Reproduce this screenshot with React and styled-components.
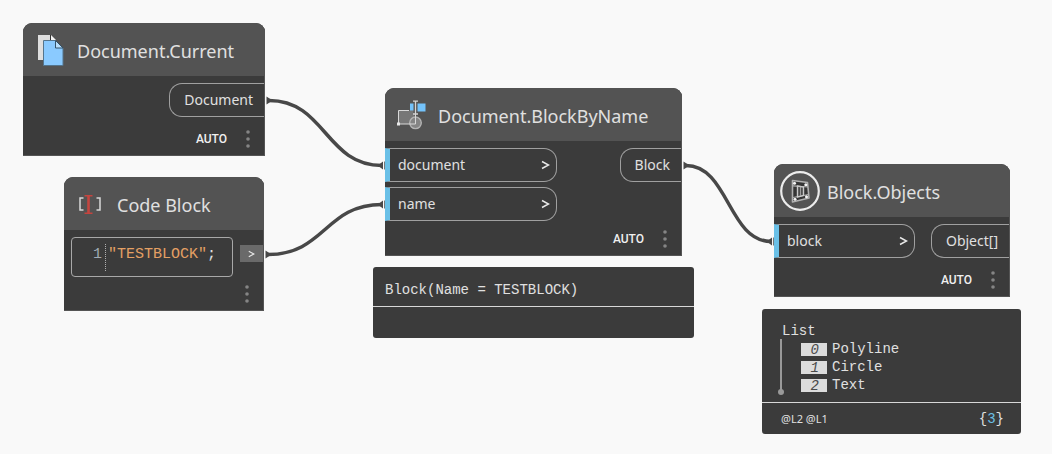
import React from "react";
import styled, { createGlobalStyle } from "styled-components";

const GlobalStyle = createGlobalStyle`
  * { box-sizing: border-box; }
  body { margin: 0; background: #f9f9f9; }
  button, input { font: inherit; color: inherit; padding: 0; margin: 0; }
  h2, ol, p { margin: 0; padding: 0; font-weight: 400; }
`;

const sans = `"Noto Sans", "Open Sans", sans-serif`;
const mono = `"Liberation Mono", monospace`;

const Canvas = styled.main`
  position: relative;
  min-height: 100vh;
  background: #f9f9f9;
  color: #e0e0e0;
  font-family: ${sans};
`;

const Wires = styled.svg`
  position: absolute;
  inset: 0;
  width: 100%;
  height: 100%;
  pointer-events: none;
`;

const Placed = styled.div`
  position: absolute;
  left: ${(p) => p.$x}px;
  top: ${(p) => p.$y}px;
  width: ${(p) => p.$w}px;
`;

const NodeCard = styled(Placed)`
  display: flex;
  flex-direction: column;
  background: #3b3b3b;
  border-radius: 9px 9px 0 0;
  overflow: hidden;
  box-shadow: inset -1px -1px 0 #555;
`;

const NodeHeader = styled.header`
  display: flex;
  align-items: center;
  height: 53px;
  padding-left: ${(p) => p.$inset}px;
  gap: ${(p) => p.$gap}px;
  background: #535353;

  svg { flex: none; }
`;

const NodeTitle = styled.h2`
  padding-top: 2px;
  font-size: 18px;
  line-height: 24px;
  white-space: nowrap;
`;

const Ports = styled.div`
  display: flex;
  justify-content: space-between;
  align-items: flex-start;
  padding: 7px 1px ${(p) => p.$below}px 0;
`;

const PortColumn = styled.div`
  display: flex;
  flex-direction: column;
  gap: 5px;
  margin-left: ${(p) => (p.$end ? "auto" : "0")};
`;

const InputPort = styled.button`
  display: flex;
  align-items: center;
  justify-content: space-between;
  width: ${(p) => p.$w}px;
  height: 34px;
  padding: 0 6px 0 8px;
  background: #3b3b3b;
  border: 1px solid #a0a0a0;
  border-left: 5px solid #6ac0e7;
  border-radius: 0 13px 13px 0;
  font-size: 14px;
  line-height: 20px;
`;

const OutputPort = styled.button`
  height: 34px;
  padding: 0 11px 0 14px;
  background: #3b3b3b;
  border: 1px solid #a0a0a0;
  border-right: 0;
  border-radius: 13px 0 0 13px;
  font-size: 14px;
  line-height: 20px;
`;

const Chevron = styled.svg`
  width: ${(p) => (p.$small ? 7 : 9)}px;
  height: ${(p) => (p.$small ? 8 : 10)}px;
`;

const NodeFooter = styled.footer`
  display: flex;
  align-items: center;
  justify-content: flex-end;
  gap: 16px;
  height: 34px;
  padding-right: 12px;
  font-family: Roboto, ${sans};
  font-size: 12px;
  font-weight: 500;
  line-height: 16px;
  color: #f0f0f0;
`;

const MenuButton = styled.button`
  display: flex;
  align-items: center;
  justify-content: center;
  width: 10px;
  height: 20px;
  background: none;
  border: 0;
`;

const CodeRow = styled.div`
  display: flex;
  align-items: flex-start;
  justify-content: space-between;
  padding: 7px 1px 0 7px;
`;

const Editor = styled.label`
  display: flex;
  align-items: flex-start;
  width: 162px;
  height: 40px;
  padding: 6px 0 0 21px;
  border: 1px solid #a8a8a8;
  border-radius: 4px;
  font-family: ${mono};
  font-size: 15px;
  line-height: 22px;
`;

const LineNumber = styled.span`
  padding-right: 3px;
  border-right: 1px dotted #b0b0b0;
  height: 27px;
  color: #9fa9b3;
`;

const CodeInput = styled.input`
  width: 11ch;
  height: 22px;
  margin-left: 2px;
  background: none;
  border: 0;
  outline: 0;
  color: #e4a064;
`;

const CodePort = styled.button`
  display: flex;
  align-items: center;
  justify-content: center;
  width: 23px;
  height: 17px;
  margin-top: 8px;
  background: #6a6a6a;
  border: 0;
`;

const Preview = styled(Placed)`
  background: #3b3b3b;
  border-radius: 3px;
  font-family: ${mono};
  font-size: 14px;
  line-height: 18px;
`;

const PreviewBody = styled.div`
  padding: ${(p) => (p.$list ? "13px 20px 8px" : "14px 12px 7px")};
  border-bottom: 1px solid #d8d8d8;
`;

const PreviewFooter = styled.div`
  display: flex;
  align-items: center;
  justify-content: space-between;
  height: 31px;
  padding: 0 17px 0 19px;
`;

const ItemList = styled.ol`
  list-style: none;
  padding-left: 19px;
`;

const Item = styled.li`
  display: flex;
  align-items: center;
  gap: 5px;
`;

const Index = styled.span`
  width: 26px;
  height: 13px;
  padding-right: 8px;
  background: #dcdcdc;
  color: #4a4a4a;
  font-style: italic;
  line-height: 14px;
  text-align: right;
`;

const ListGuide = styled.svg`
  position: absolute;
  left: 15px;
  top: 30px;
  width: 8px;
  height: 57px;
`;

const Levels = styled.p`
  font-family: ${sans};
  font-size: 11px;
`;

const Count = styled.span`
  color: #6ac0e7;
`;

const Braces = styled.span`
  color: #e0e0e0;
`;

function Arrow({ small = false }) {
  return (
    <Chevron $small={small} viewBox="0 0 9 10" aria-hidden="true">
      <path d="M1 1.5 L7.6 5 L1 8.5" fill="none" stroke="#e8e8e8" strokeWidth="1.5" />
    </Chevron>
  );
}

function Menu() {
  return (
    <MenuButton type="button" aria-label="Node menu">
      <svg width="4" height="18" viewBox="0 0 4 18" fill="#858585" aria-hidden="true">
        <circle cx="2" cy="2" r="1.8" />
        <circle cx="2" cy="9" r="1.8" />
        <circle cx="2" cy="16" r="1.8" />
      </svg>
    </MenuButton>
  );
}

function DocumentIcon() {
  return (
    <svg width="28" height="34" viewBox="0 0 28 34" aria-hidden="true">
      <path d="M1 2 H14 V27 H1 Z" fill="#dedede" />
      <path d="M14 2 L19 7 V8 H14 Z" fill="#f4f4f4" />
      <path d="M13.500 2 V7.500" stroke="#333" strokeWidth="1" />
      <path d="M6.500 7.500 H18.500 L26 15 V32.500 H6.500 Z" fill="#8acaff" stroke="#54748c" />
      <path d="M18.500 7.500 V15 H26 Z" fill="#b9dffc" stroke="#33536b" />
    </svg>
  );
}

function CodeIcon() {
  return (
    <svg width="24" height="22" viewBox="0 0 24 22" fill="none" aria-hidden="true">
      <path d="M5.500 5 H2 V17 H5.500 M18.500 5 H22 V17 H18.500" stroke="#d8d8d8" strokeWidth="1.500" />
      <path d="M10.500 3 V20" stroke="#c4453f" strokeWidth="2.600" />
      <path d="M6.500 2.800 H14.500 M6.500 20.300 H14.500" stroke="#c4453f" strokeWidth="1.500" />
    </svg>
  );
}

function BlockByNameIcon() {
  return (
    <svg width="30" height="30" viewBox="0 0 30 30" fill="none" aria-hidden="true">
      <path d="M14 3.500 H29.500 V11.500 H14 Z" fill="#74c3fb" />
      <path d="M2.500 10.500 H18.500 V24 H2.500 Z" fill="#777" />
      <circle cx="19.500" cy="22.800" r="5.800" fill="#858585" stroke="#b4b4b4" strokeWidth="1.400" />
      <path d="M13 10.500 H2.500 V24 H19.500 V13" stroke="#d8d8d8" />
      <path d="M1 22.500 H4 V25.500 H1 Z" fill="#e8e8e8" />
      <path d="M19.500 1 V13" stroke="#535353" strokeWidth="4" />
      <path d="M19.500 1 V13 M17 1.200 H22 M17 14 H22" stroke="#d4d4d4" strokeWidth="1.300" />
    </svg>
  );
}

function ObjectsIcon() {
  return (
    <svg width="42" height="42" viewBox="0 0 42 42" fill="none" aria-hidden="true">
      <circle cx="21" cy="21" r="18.800" stroke="#ececec" strokeWidth="2.200" />
      <path d="M13.500 10.500 L28.500 12.500 L30 28 L13.500 32 Z" fill="#353535" stroke="#b0b0b0" strokeWidth="1.600" strokeLinejoin="round" />
      <path d="M14 15.800 L29 17 M14 27.500 L29.500 24.500" stroke="#b0b0b0" strokeWidth="1.200" />
      <path d="M18.500 16 L24.500 17 V25.500 L18.500 27 Z" fill="#4d4d4d" stroke="#c8c8c8" strokeWidth="1.400" />
      <path d="M21.500 17 V26" stroke="#b0b0b0" strokeWidth="0.800" />
      <g fill="#f4f4f4">
        <circle cx="15.500" cy="13.300" r="1.500" />
        <circle cx="26.800" cy="14.800" r="1.500" />
        <circle cx="16" cy="29.300" r="1.500" />
        <circle cx="27.500" cy="26.800" r="1.500" />
      </g>
    </svg>
  );
}

const wires = [
  { x1: 269, y1: 100.5, x2: 382, y2: 165.5 },
  { x1: 268, y1: 254.5, x2: 382, y2: 204.5 },
  { x1: 686, y1: 165.5, x2: 771, y2: 241.5 },
];

function Wire({ x1, y1, x2, y2 }) {
  const mid = (x1 + x2) / 2;
  return (
    <g>
      <path
        d={`M${x1} ${y1} C${mid} ${y1} ${mid} ${y2} ${x2} ${y2}`}
        fill="none"
        stroke="#484848"
        strokeWidth="3.500"
      />
      <path
        d={`M${x1 - 2.5} ${y1 - 4} L${x1 + 2} ${y1 - 1} V${y1 + 1} L${x1 - 2.5} ${y1 + 4} Z`}
        fill="#484848"
      />
      <path
        d={`M${x2 + 1} ${y2 - 4} L${x2 - 3} ${y2 - 1} V${y2 + 1} L${x2 + 1} ${y2 + 4} Z`}
        fill="#484848"
      />
      <path d={`M${x2 + 2.5} ${y2 - 4} V${y2 + 4}`} stroke="#777" />
    </g>
  );
}

function Node({ x, y, w, title, icon, inset, gap, inputs = [], inputWidth, output, below = 5 }) {
  return (
    <NodeCard as="section" $x={x} $y={y} $w={w}>
      <NodeHeader $inset={inset} $gap={gap}>
        {icon}
        <NodeTitle>{title}</NodeTitle>
      </NodeHeader>
      <Ports $below={below}>
        {inputs.length > 0 && (
          <PortColumn>
            {inputs.map((name) => (
              <InputPort type="button" key={name} $w={inputWidth}>
                {name}
                <Arrow />
              </InputPort>
            ))}
          </PortColumn>
        )}
        <PortColumn $end>
          <OutputPort type="button">{output}</OutputPort>
        </PortColumn>
      </Ports>
      <NodeFooter>
        AUTO
        <Menu />
      </NodeFooter>
    </NodeCard>
  );
}

export default function App() {
  return (
    <Canvas>
      <GlobalStyle />
      <Node x={23} y={23} w={242} title="Document.Current" icon={<DocumentIcon />}
        inset={14} gap={12} output="Document" />

      <NodeCard as="section" $x={64} $y={177} $w={200}>
        <NodeHeader $inset={14} $gap={15}>
          <CodeIcon />
          <NodeTitle>Code Block</NodeTitle>
        </NodeHeader>
        <CodeRow>
          <Editor>
            <LineNumber>1</LineNumber>
            <CodeInput aria-label="Code" defaultValue={'"TESTBLOCK"'} spellCheck={false} />
            ;
          </Editor>
          <CodePort type="button" aria-label="Output">
            <Arrow small />
          </CodePort>
        </CodeRow>
        <NodeFooter>
          <Menu />
        </NodeFooter>
      </NodeCard>

      <Node x={385} y={88} w={297} title="Document.BlockByName" icon={<BlockByNameIcon />}
        inset={11} gap={12} inputs={["document", "name"]} inputWidth={172} output="Block" below={1} />
      <Preview $x={373} $y={267} $w={321}>
        <PreviewBody>Block(Name = TESTBLOCK)</PreviewBody>
        <PreviewFooter />
      </Preview>

      <Node x={774} y={164} w={236} title="Block.Objects" icon={<ObjectsIcon />}
        inset={5} gap={6} inputs={["block"]} inputWidth={141} output="Object[]" />
      <Preview $x={762} $y={309} $w={259}>
        <PreviewBody $list>
          List
          <ListGuide viewBox="0 0 8 57" aria-hidden="true">
            <path d="M4 0 V53" stroke="#999" strokeWidth="2" />
            <circle cx="4" cy="53" r="3" fill="#999" />
          </ListGuide>
          <ItemList>
            {["Polyline", "Circle", "Text"].map((name, i) => (
              <Item key={name}>
                <Index>{i}</Index>
                {name}
              </Item>
            ))}
          </ItemList>
        </PreviewBody>
        <PreviewFooter>
          <Levels>@L2 @L1</Levels>
          <Braces>{"{"}<Count>3</Count>{"}"}</Braces>
        </PreviewFooter>
      </Preview>

      <Wires aria-hidden="true">
        {wires.map((wire) => (
          <Wire key={wire.y1} {...wire} />
        ))}
      </Wires>
    </Canvas>
  );
}
